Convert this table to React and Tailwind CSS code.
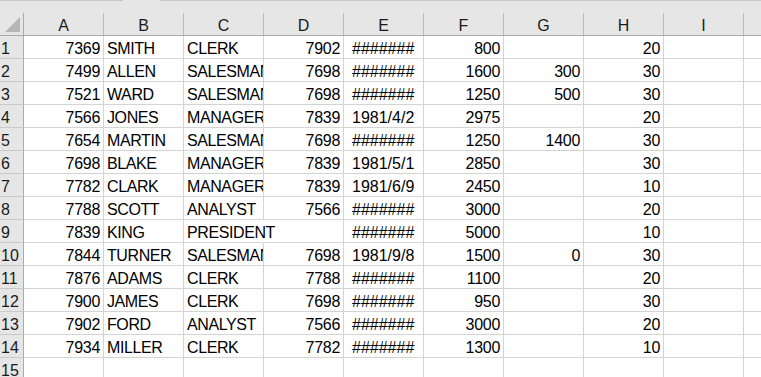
import React from "react";

const COLS = ["A", "B", "C", "D", "E", "F", "G", "H", "I", ""];
const H = "#######";
const ROWS = [
  ["7369", "SMITH", "CLERK", "7902", H, "800", "", "20"],
  ["7499", "ALLEN", "SALESMAN", "7698", H, "1600", "300", "30"],
  ["7521", "WARD", "SALESMAN", "7698", H, "1250", "500", "30"],
  ["7566", "JONES", "MANAGER", "7839", "1981/4/2", "2975", "", "20"],
  ["7654", "MARTIN", "SALESMAN", "7698", H, "1250", "1400", "30"],
  ["7698", "BLAKE", "MANAGER", "7839", "1981/5/1", "2850", "", "30"],
  ["7782", "CLARK", "MANAGER", "7839", "1981/6/9", "2450", "", "10"],
  ["7788", "SCOTT", "ANALYST", "7566", H, "3000", "", "20"],
  ["7839", "KING", "PRESIDENT", "", H, "5000", "", "10"],
  ["7844", "TURNER", "SALESMAN", "7698", "1981/9/8", "1500", "0", "30"],
  ["7876", "ADAMS", "CLERK", "7788", H, "1100", "", "20"],
  ["7900", "JAMES", "CLERK", "7698", H, "950", "", "30"],
  ["7902", "FORD", "ANALYST", "7566", H, "3000", "", "20"],
  ["7934", "MILLER", "CLERK", "7782", H, "1300", "", "10"],
  ["", "", "", "", "", "", "", ""],
];

// alignment per column index 0..9
const ALIGN = ["r", "l", "l", "r", "e", "r", "r", "r", "l", "l"];

function Cell({ value, align, spill }) {
  let cls =
    "h-[23px] border-b border-[#d4d4d4] flex items-end whitespace-nowrap leading-[18px] ";
  cls += spill ? "border-r border-r-transparent overflow-visible relative z-10 " : "border-r overflow-hidden ";
  if (align === "r") cls += "justify-end pr-[3px] tracking-[-0.3px]";
  else if (align === "e") cls += "justify-start pl-[8px]";
  else cls += "justify-start pl-[3px] tracking-[-0.4px]";
  return <div className={cls}>{value}</div>;
}

export default function App() {
  return (
    <div className="w-[761px] h-[377px] overflow-hidden bg-white font-['Liberation_Sans',Arial,sans-serif] text-[16px] text-black">
      <div className="h-[13px] bg-[#e6e6e6] flex flex-col">
        <div className="h-[1px] flex">
          <div className="w-[123px] bg-[#c6c6c6]" />
          <div className="w-[37px] bg-[#e9e9e9]" />
          <div className="flex-1 bg-[#c6c6c6]" />
        </div>
      </div>
      <div className="grid w-max grid-cols-[24px_repeat(10,80px)]">
        {/* header row */}
        <div className="h-[23px] bg-[#e6e6e6] border-r border-b border-[#ababab] relative">
          <svg width="24" height="23" className="absolute left-0 top-0">
            <polygon points="5,19 20,19 20,4" fill="#b6b6b6" />
          </svg>
        </div>
        {COLS.map((c, i) => (
          <div
            key={"h" + i}
            className="h-[23px] bg-[#e6e6e6] border-r border-r-[#bcbcbc] border-b border-b-[#ababab] flex items-end justify-center leading-[18px] text-[#1a1a1a]"
          >
            {c}
          </div>
        ))}
        {ROWS.map((row, r) => {
          const full = [...row, "", ""];
          return (
            <React.Fragment key={"r" + r}>
              <div className="h-[23px] bg-[#e6e6e6] border-r border-r-[#ababab] border-b border-b-[#c9c9c9] flex items-end pl-[1px] leading-[18px] text-[#1a1a1a]">
                {r + 1}
              </div>
              {full.map((v, ci) => {
                const spill =
                  v !== "" && ALIGN[ci] === "l" && full[ci + 1] === "" && ci < 9;
                return <Cell key={ci} value={v} align={ALIGN[ci]} spill={spill} />;
              })}
            </React.Fragment>
          );
        })}
      </div>
    </div>
  );
}
